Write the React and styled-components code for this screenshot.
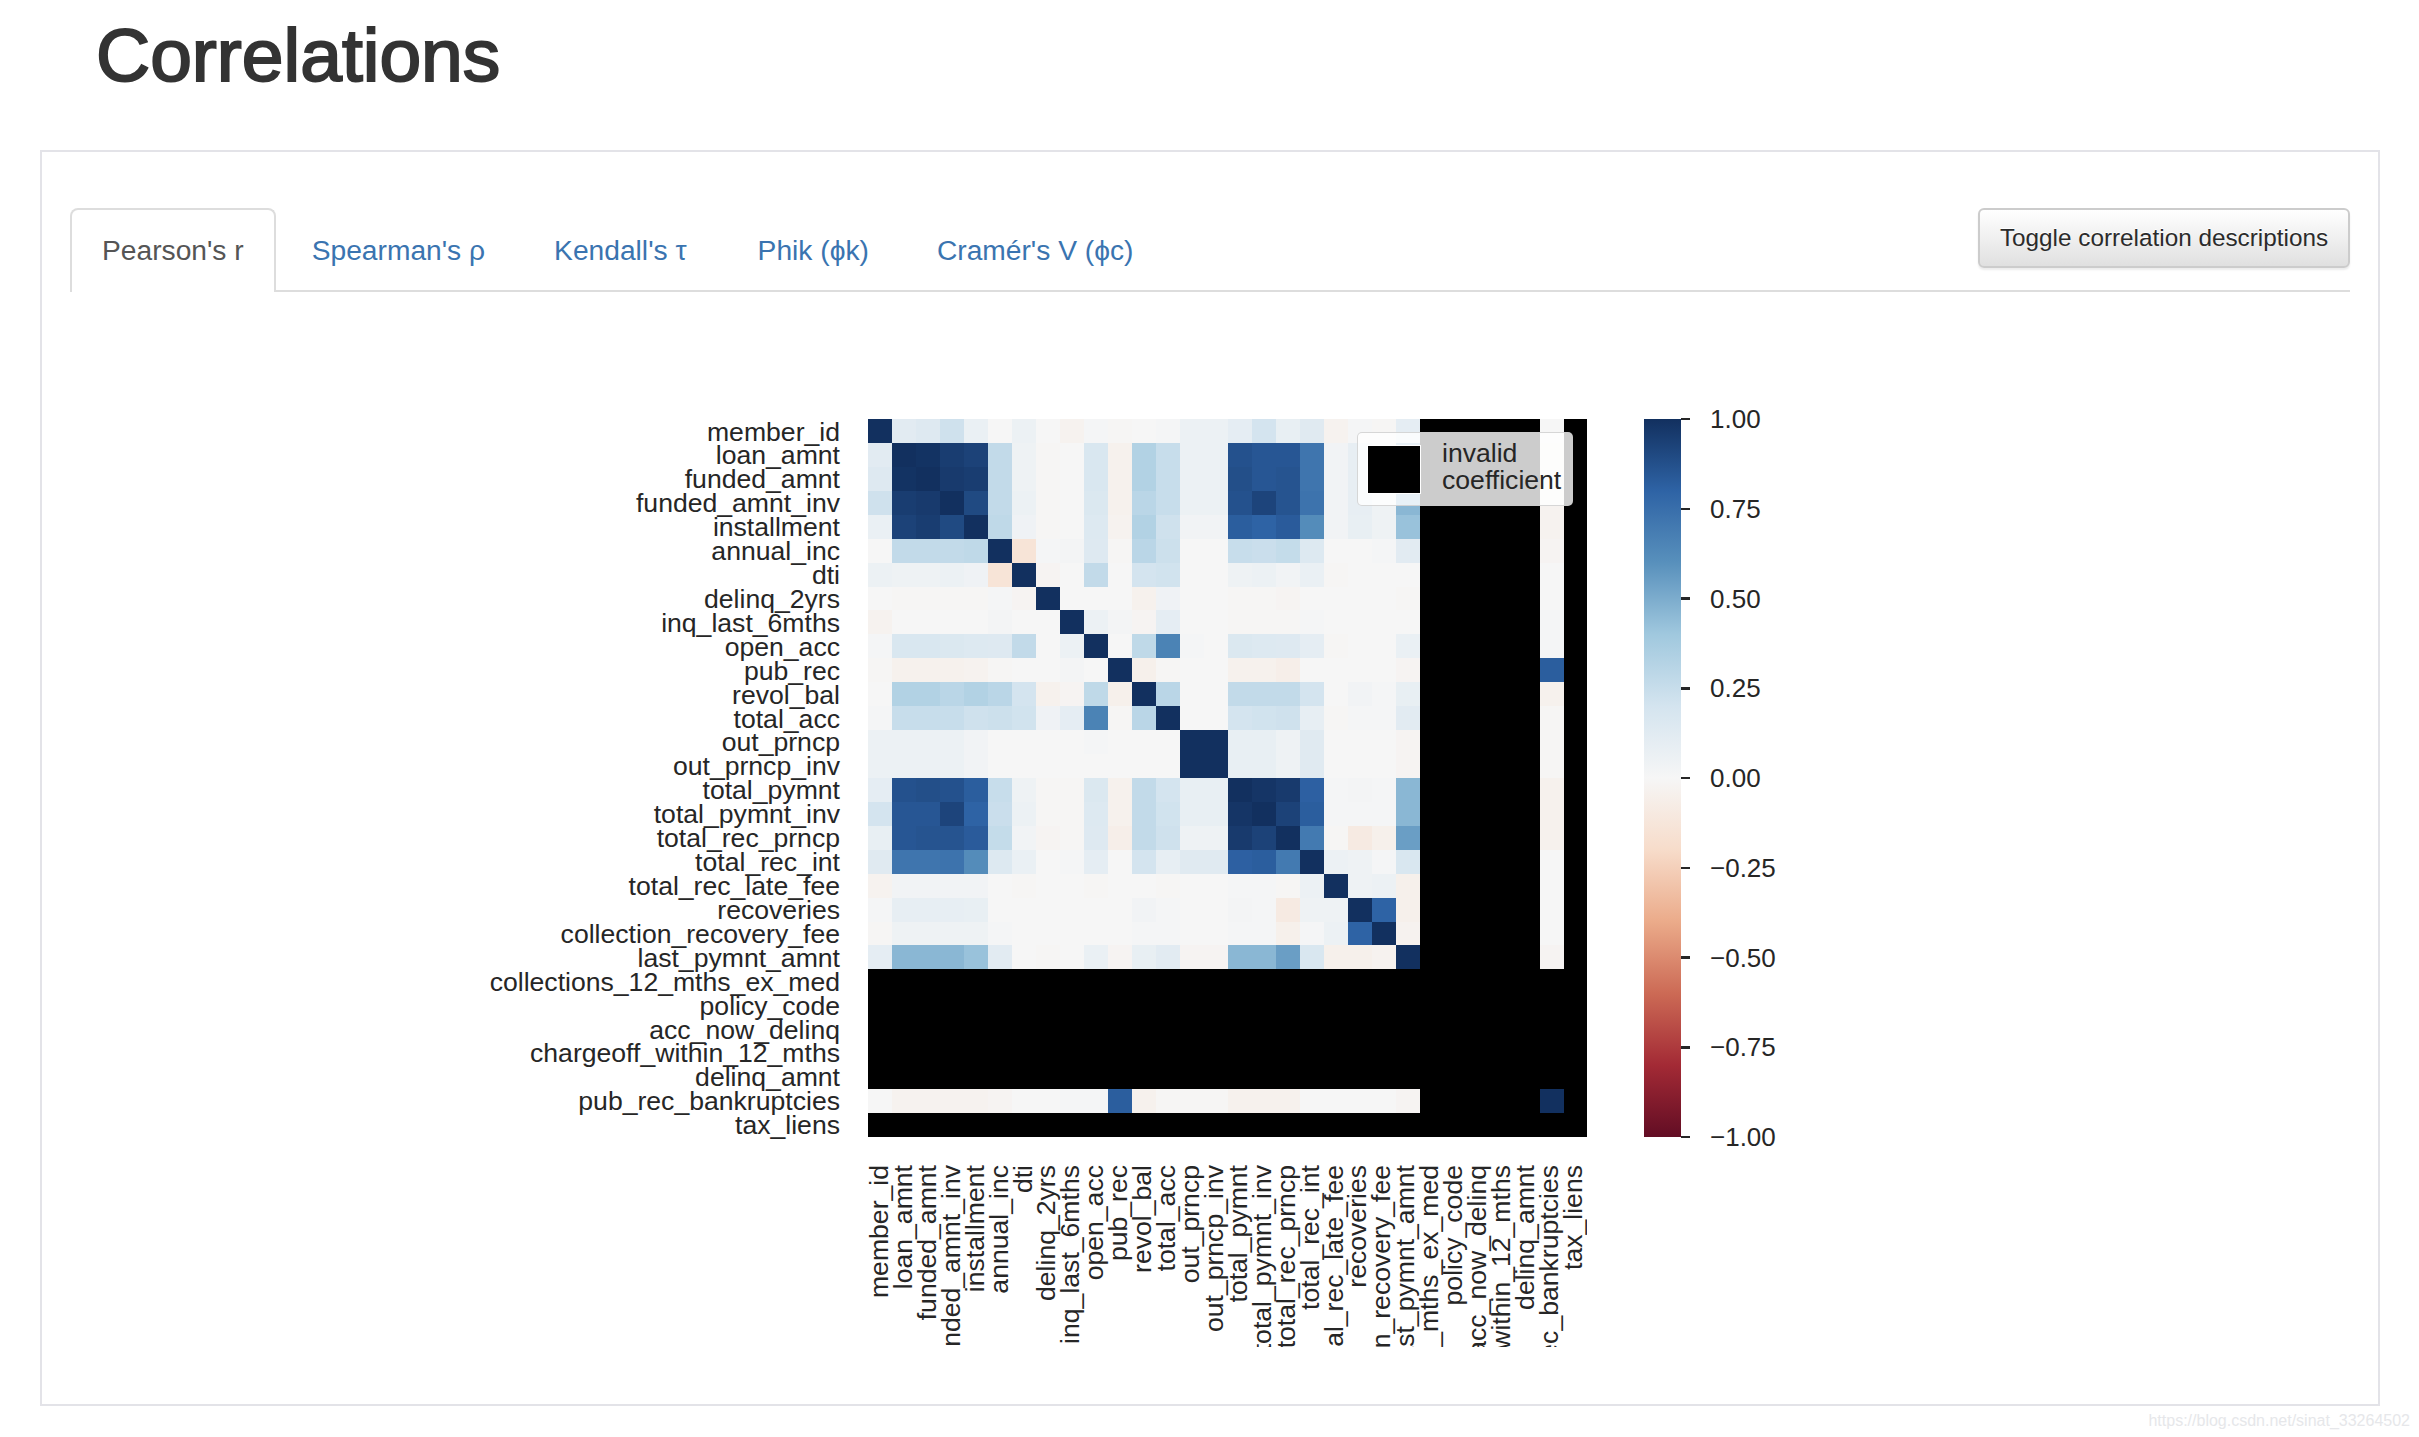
import React from 'react'
import styled, { createGlobalStyle } from 'styled-components'

const GlobalStyle = createGlobalStyle`
    html, body {
        margin: 0;
        padding: 0;
        background: #ffffff;
        font-family: "Liberation Sans", Arial, sans-serif;
    }
`

const FIELDS = [
    'member_id', 'loan_amnt', 'funded_amnt', 'funded_amnt_inv', 'installment', 'annual_inc',
    'dti', 'delinq_2yrs', 'inq_last_6mths', 'open_acc', 'pub_rec', 'revol_bal', 'total_acc',
    'out_prncp', 'out_prncp_inv', 'total_pymnt', 'total_pymnt_inv', 'total_rec_prncp',
    'total_rec_int', 'total_rec_late_fee', 'recoveries', 'collection_recovery_fee',
    'last_pymnt_amnt', 'collections_12_mths_ex_med', 'policy_code', 'acc_now_delinq',
    'chargeoff_within_12_mths', 'delinq_amnt', 'pub_rec_bankruptcies', 'tax_liens',
]

// upper triangle, each row starts on the diagonal and stops at last_pymnt_amnt
const UPPER = [
    [1, .12, .14, .22, .07, 0, .06, 0, -.03, .01, -.01, 0, .01, .06, .06, .1, .2, .08, .13, -.03, .01, -.01, .1],
    [1, .99, .95, .93, .27, .05, -.01, 0, .17, -.04, .33, .25, .06, .06, .87, .85, .85, .72, .03, .09, .05, .46],
    [1, .96, .95, .27, .05, -.01, 0, .17, -.04, .33, .25, .06, .06, .88, .85, .86, .72, .03, .09, .05, .46],
    [1, .9, .27, .06, -.01, 0, .16, -.04, .3, .25, .06, .06, .87, .92, .86, .73, .03, .09, .05, .46],
    [1, .28, .04, -.01, 0, .15, -.03, .33, .22, .03, .03, .82, .8, .83, .62, .03, .08, .05, .42],
    [1, -.14, .01, .02, .14, -.01, .3, .23, 0, 0, .25, .24, .26, .15, 0, 0, .01, .12],
    [1, -.02, 0, .27, 0, .2, .21, 0, 0, .05, .06, .03, .07, -.01, 0, 0, 0],
    [1, 0, 0, 0, -.04, .04, 0, 0, -.01, -.01, -.02, 0, 0, 0, 0, -.01],
    [1, .06, .02, -.02, .1, 0, 0, -.01, -.01, -.01, .01, 0, 0, 0, 0],
    [1, 0, .28, .66, .01, 0, .16, .15, .14, .1, -.01, 0, 0, .07],
    [1, -.05, -.01, 0, 0, -.04, -.04, -.06, 0, 0, 0, 0, -.02],
    [1, .3, 0, 0, .27, .27, .27, .2, 0, .03, .01, .08],
    [1, 0, 0, .2, .21, .22, .09, -.01, .01, .01, .12],
    [1, 1, .08, .08, .05, .13, 0, 0, 0, -.02],
    [1, .08, .08, .05, .13, 0, 0, 0, -.02],
    [1, .98, .96, .81, .01, .02, .01, .46],
    [1, .93, .82, .01, .01, .01, .46],
    [1, .7, -.01, -.09, -.05, .55],
    [1, .06, .05, .01, .17],
    [1, .05, .06, -.05],
    [1, .8, -.05],
    [1, -.03],
    [1],
]

// pub_rec_bankruptcies against the first 23 fields
const BANKRUPTCIES = [
    0, -.03, -.03, -.03, -.03, -.02, 0, 0, .01, .01, .82, -.04, -.01, -.01, -.01,
    -.04, -.04, -.04, 0, 0, 0, 0, -.02,
]

const STOPS = [
    [-1, [98, 13, 36]], [-.8, [163, 42, 53]], [-.6, [204, 106, 85]], [-.4, [235, 171, 138]],
    [-.2, [247, 220, 202]], [0, [246, 246, 246]], [.2, [212, 228, 239]], [.4, [160, 200, 222]],
    [.6, [88, 144, 188]], [.8, [46, 99, 165]], [1, [18, 48, 95]],
]

const colorFor = value => {
    for (let i = 1; i < STOPS.length; i++) {
        const [x0, c0] = STOPS[i - 1]
        const [x1, c1] = STOPS[i]
        if (value <= x1) {
            const t = (value - x0) / (x1 - x0)
            return `rgb(${c0.map((c, k) => Math.round(c + (c1[k] - c) * t)).join(',')})`
        }
    }
    return 'rgb(18,48,95)'
}

const cellValue = (row, col) => {
    const a = Math.min(row, col)
    const b = Math.max(row, col)
    if (a === 28 && b === 28) return 1
    if (b === 28 && a < 23) return BANKRUPTCIES[a]
    if (b < 23) return UPPER[a][b - a]
    return null
}

const GRADIENT = STOPS.slice().reverse()
    .map(([x, c]) => `rgb(${c.join(',')}) ${((1 - x) / 2) * 100}%`).join(', ')

const TICKS = ['1.00', '0.75', '0.50', '0.25', '0.00', '−0.25', '−0.50', '−0.75', '−1.00']

const Page = styled.div`
    position: relative;
    width: 2419px;
    height: 1437px;
    overflow: hidden;
    color: #333333;
`

const Title = styled.h1`
    margin: 18px 0 57px 96px;
    font-size: 75px;
    line-height: 75px;
    font-weight: 400;
    color: #333333;
    -webkit-text-stroke: 2px #333333;
`

const Panel = styled.div`
    box-sizing: border-box;
    width: 2340px;
    margin-left: 40px;
    padding: 56px 28px 57px 28px;
    border: 2px solid #e3e3e8;
`

const TabBar = styled.div`
    display: flex;
    align-items: flex-start;
    height: 84px;
    box-sizing: border-box;
    border-bottom: 2px solid #dddddd;
`

const Tab = styled.a`
    box-sizing: border-box;
    height: 84px;
    margin-right: ${props => props.$gap || 4}px;
    padding: 20px 30px;
    font-size: 28.2px;
    line-height: 40px;
    white-space: nowrap;
    border: 2px solid ${props => (props.$active ? '#dddddd' : 'transparent')};
    border-bottom: none;
    border-radius: 8px 8px 0 0;
    background: ${props => (props.$active ? '#ffffff' : 'transparent')};
    color: ${props => (props.$active ? '#555555' : '#3a74b0')};
`

const ToggleButton = styled.button`
    box-sizing: border-box;
    width: 372px;
    height: 60px;
    margin-left: auto;
    padding: 0;
    font-family: inherit;
    font-size: 24.3px;
    color: #2b2b2b;
    text-shadow: 0 -1px 0 #ffffff;
    background: linear-gradient(to bottom, #ffffff 0%, #e0e0e0 100%);
    border: 2px solid #cccccc;
    border-radius: 6px;
    box-shadow: 0 2px 2px rgba(0, 0, 0, 0.08);
`

const ChartRow = styled.div`
    display: flex;
    align-items: flex-start;
    margin-top: 127px;
`

const YLabels = styled.div`
    width: 770px;
    margin-right: 28px;
    padding-top: 1.5px;
    text-align: right;
`

const YLabel = styled.div`
    height: 23.93px;
    font-size: 26.6px;
    line-height: 23.93px;
    white-space: nowrap;
    color: #262626;
`

const MatrixColumn = styled.div`
    position: relative;
    width: 719px;
    display: flex;
    flex-direction: column;
`

const Matrix = styled.svg`
    display: block;
    width: 719px;
    height: 718px;
`

const Legend = styled.div`
    position: absolute;
    top: 13px;
    left: 489px;
    box-sizing: border-box;
    width: 216px;
    height: 74px;
    display: flex;
    align-items: center;
    padding: 0 9px;
    background: rgba(255, 255, 255, 0.8);
    border: 1px solid rgba(204, 204, 204, 0.8);
    border-radius: 5px;
`

const LegendSwatch = styled.div`
    width: 54px;
    height: 49px;
    margin-right: 21px;
    background: #000000;
    border: 1px solid #ffffff;
    box-sizing: border-box;
`

const LegendText = styled.div`
    padding-bottom: 4px;
    font-size: 26.6px;
    line-height: 27px;
    white-space: nowrap;
    color: #262626;
`

const XLabels = styled.div`
    display: flex;
    align-items: flex-start;
    height: 182px;
    margin-top: 28px;
    overflow: hidden;
`

const XColumn = styled.div`
    flex: none;
    width: 23.93px;
    display: flex;
    justify-content: center;
    align-items: flex-start;
`

const XText = styled.div`
    flex: none;
    writing-mode: vertical-rl;
    transform: rotate(180deg);
    white-space: nowrap;
    font-size: 26.6px;
    line-height: 23.93px;
    color: #262626;
`

const ColorBar = styled.div`
    display: flex;
    margin-left: 57px;
    height: 718px;
`

const BarGradient = styled.div`
    width: 37px;
    height: 718px;
    background: linear-gradient(to bottom, ${GRADIENT});
`

const TickColumn = styled.div`
    display: flex;
    flex-direction: column;
    justify-content: space-between;
    height: 718px;
`

const Tick = styled.div`
    display: flex;
    align-items: center;
    height: 0;
`

const TickMark = styled.div`
    width: 9px;
    height: 2.5px;
    margin-right: 20px;
    background: #262626;
`

const TickLabel = styled.div`
    font-size: 26px;
    line-height: 26px;
    white-space: nowrap;
    color: #262626;
`

const Watermark = styled.div`
    position: absolute;
    right: 9px;
    bottom: 7px;
    font-size: 16px;
    color: #e6e7ea;
`

const App = () => {
    const cells = []
    FIELDS.forEach((_, row) => {
        FIELDS.forEach((_, col) => {
            const value = cellValue(row, col)
            cells.push(
                <rect
                    key={`${row}-${col}`}
                    x={col * 24}
                    y={row * 23.93}
                    width="24"
                    height="23.93"
                    fill={value === null ? '#000000' : colorFor(value)}
                />
            )
        })
    })

    return (
        <Page>
            <GlobalStyle />
            <Title>Correlations</Title>
            <Panel>
                <TabBar>
                    <Tab $active>Pearson's r</Tab>
                    <Tab $gap={5}>Spearman's ρ</Tab>
                    <Tab $gap={7}>Kendall's τ</Tab>
                    <Tab>Phik (ϕk)</Tab>
                    <Tab>Cramér's V (ϕc)</Tab>
                    <ToggleButton>Toggle correlation descriptions</ToggleButton>
                </TabBar>
                <ChartRow>
                    <YLabels>
                        {FIELDS.map(name => <YLabel key={name}>{name}</YLabel>)}
                    </YLabels>
                    <MatrixColumn>
                        <Matrix viewBox="0 0 719 718" shapeRendering="crispEdges">{cells}</Matrix>
                        <Legend>
                            <LegendSwatch />
                            <LegendText>invalid<br />coefficient</LegendText>
                        </Legend>
                        <XLabels>
                            {FIELDS.map(name => (
                                <XColumn key={name}><XText>{name}</XText></XColumn>
                            ))}
                        </XLabels>
                    </MatrixColumn>
                    <ColorBar>
                        <BarGradient />
                        <TickColumn>
                            {TICKS.map(label => (
                                <Tick key={label}>
                                    <TickMark />
                                    <TickLabel>{label}</TickLabel>
                                </Tick>
                            ))}
                        </TickColumn>
                    </ColorBar>
                </ChartRow>
            </Panel>
            <Watermark>https://blog.csdn.net/sinat_33264502</Watermark>
        </Page>
    )
}

export default App
